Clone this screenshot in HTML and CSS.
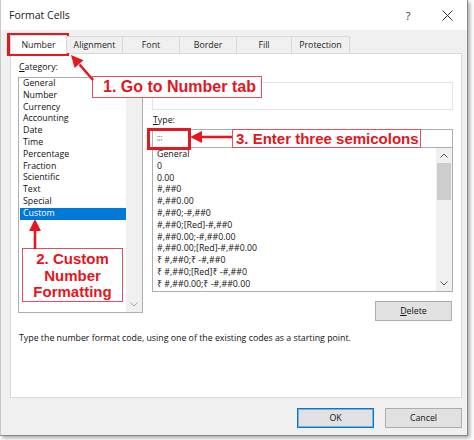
FILE: index.html
```html
<!DOCTYPE html>
<html lang="en">
<head>
<meta charset="utf-8">
<title>Format Cells</title>
<link rel="stylesheet" href="styles.css">
</head>
<body>
<div class="window">
  <div class="titlebar">
    <span class="title">Format Cells</span>
    <span class="help">?</span>
    <span class="close"><svg width="11" height="11" viewBox="0 0 11 11"><path d="M0.5 0.5 L10.5 10.5 M10.5 0.5 L0.5 10.5" stroke="#333" stroke-width="1" fill="none"/></svg></span>
  </div>
  <div class="tabs">
    <div class="tab active w57">Number</div>
    <div class="tab w57">Alignment</div>
    <div class="tab w58">Font</div>
    <div class="tab w58">Border</div>
    <div class="tab w56">Fill</div>
    <div class="tab w59">Protection</div>
  </div>
  <div class="panel">
    <div class="cols">
      <div class="left">
        <div class="label"><u>C</u>ategory:</div>
        <div class="listbox cat">
          <div class="items">
            <div class="item">General</div>
            <div class="item">Number</div>
            <div class="item">Currency</div>
            <div class="item">Accounting</div>
            <div class="item">Date</div>
            <div class="item">Time</div>
            <div class="item">Percentage</div>
            <div class="item">Fraction</div>
            <div class="item">Scientific</div>
            <div class="item">Text</div>
            <div class="item">Special</div>
            <div class="item selected">Custom</div>
          </div>
          <div class="vscroll disabled">
            <span class="sbtn"><svg width="8" height="5" viewBox="0 0 8 5"><path d="M0.5 0.5 L4 4 L7.5 0.5" stroke="#b0b0b0" fill="none"/></svg></span>
            <span class="track"></span>
            <span class="sbtn"><svg width="8" height="5" viewBox="0 0 8 5"><path d="M0.5 0.5 L4 4 L7.5 0.5" stroke="#a8a8a8" fill="none"/></svg></span>
          </div>
        </div>
      </div>
      <div class="right">
        <div class="sample"></div>
        <div class="label type-label"><u>T</u>ype:</div>
        <div class="input">;;;</div>
        <div class="listbox types">
          <div class="items">
            <div class="item">General</div>
            <div class="item">0</div>
            <div class="item">0.00</div>
            <div class="item">#,##0</div>
            <div class="item">#,##0.00</div>
            <div class="item">#,##0;-#,##0</div>
            <div class="item">#,##0;[Red]-#,##0</div>
            <div class="item">#,##0.00;-#,##0.00</div>
            <div class="item">#,##0.00;[Red]-#,##0.00</div>
            <div class="item">₹ #,##0;₹ -#,##0</div>
            <div class="item">₹ #,##0;[Red]₹ -#,##0</div>
            <div class="item">₹ #,##0.00;₹ -#,##0.00</div>
          </div>
          <div class="vscroll">
            <span class="sbtn"><svg width="8" height="5" viewBox="0 0 8 5"><path d="M0.5 4.5 L4 1 L7.5 4.5" stroke="#555" fill="none"/></svg></span>
            <span class="track"><span class="thumb"></span></span>
            <span class="sbtn"><svg width="8" height="5" viewBox="0 0 8 5"><path d="M0.5 0.5 L4 4 L7.5 0.5" stroke="#555" fill="none"/></svg></span>
          </div>
        </div>
        <div class="btnrow"><button class="btn"><u>D</u>elete</button></div>
      </div>
    </div>
    <p class="desc">Type the number format code, using one of the existing codes as a starting point.</p>
  </div>
  <div class="footer">
    <button class="btn ok">OK</button>
    <button class="btn">Cancel</button>
  </div>
</div>

<div class="hl hl-tab"></div>
<div class="hl hl-type"></div>
<div class="note note1">1. Go to Number tab</div>
<div class="note note2">2. Custom<br>Number<br>Formatting</div>
<div class="note note3">3. Enter three semicolons</div>
<svg class="arrows" width="474" height="440" viewBox="0 0 474 440">
  <g stroke="#e3191f" stroke-width="2.6" fill="none">
    <line x1="93" y1="80" x2="79.5" y2="64.5"/>
    <line x1="35" y1="249" x2="35" y2="230"/>
    <line x1="232" y1="137" x2="200" y2="137"/>
  </g>
  <g fill="#e3191f">
    <polygon points="71,55 83.5,60.2 74.6,68"/>
    <polygon points="35,219 41,231 29,231"/>
    <polygon points="190,137 202,131 202,143"/>
  </g>
</svg>
</body>
</html>
```

FILE: styles.css
```css
* { box-sizing: border-box; }
html, body { margin: 0; padding: 0; background: #fff; }
body {
  width: 474px;
  height: 440px;
  position: relative;
  overflow: hidden;
  font-family: "Open Sans", "Noto Sans", sans-serif;
  font-size: 8.8px;
  color: #111;
}
button { font-family: inherit; font-size: inherit; color: inherit; padding: 0; }

.window {
  width: 468px;
  height: 436px;
  background: #f0f0f0;
  border-left: 1px solid #c9c9c9;
  border-right: 1px solid #8a8a8a;
  border-bottom: 1px solid #8a8a8a;
  box-shadow: 2px 2px 4px rgba(0, 0, 0, 0.35);
  display: flex;
  flex-direction: column;
}

.titlebar {
  flex: none;
  height: 30px;
  background: #fff;
  display: flex;
  align-items: center;
  padding-left: 8px;
}
.title { flex: 1; font-size: 10.5px; color: #222; }
.help { width: 38px; text-align: center; font-size: 11px; color: #333; }
.close { width: 40px; display: flex; justify-content: center; align-items: center; }

.tabs {
  flex: none;
  display: flex;
  align-items: flex-end;
  height: 18px;
  margin-top: 5px;
  margin-left: 9px;
  position: relative;
  z-index: 1;
}
.tab {
  height: 17px;
  border: 1px solid #d9d9d9;
  border-bottom: none;
  margin-right: -1px;
  background: #f0f0f0;
  display: flex;
  align-items: center;
  justify-content: center;
  color: #222;
}
.tab.active { height: 19px; margin-bottom: -1px; background: #fff; padding-bottom: 1px; }
.w56 { width: 56px; }
.w57 { width: 57px; }
.w58 { width: 58px; }
.w59 { width: 59px; }

.panel {
  flex: none;
  margin-left: 9px;
  width: 452px;
  height: 345px;
  background: #fff;
  border: 1px solid #d9d9d9;
  padding: 7px 8px 0 7px;
}
.cols {
  display: grid;
  grid-template-columns: 125px 301px;
  column-gap: 9px;
}
.label { height: 12px; line-height: 12px; padding-left: 1px; }

.listbox {
  border: 1px solid #abadb3;
  background: #fff;
  display: flex;
}
.listbox .items { flex: 1; }
.item { height: 11.8px; line-height: 11.8px; white-space: nowrap; }
.cat { margin-top: 4px; height: 236px; }
.cat .item { padding-left: 3px; margin-left: 1px; }
.item.selected { background: #0078d7; color: #fff; }
.types { margin-top: -1px; height: 145px; }
.types .items { padding-top: 1px; }
.types .item { padding-left: 4px; }

.vscroll {
  width: 16px;
  flex: none;
  background: #f0f0f0;
  display: flex;
  flex-direction: column;
}
.sbtn { height: 15px; flex: none; display: flex; align-items: center; justify-content: center; }
.track { flex: 1; display: flex; flex-direction: column; padding: 0 1px; }
.thumb { height: 37px; background: #cdcdcd; }

.sample { margin-top: 21px; height: 28px; border: 1px solid #e3e3e3; }
.type-label { margin-top: 4px; }
.input {
  margin-top: 3px;
  height: 19px;
  border: 1px solid #abadb3;
  padding-left: 4px;
  line-height: 16px;
  font-size: 7px;
  color: #444;
}
.btnrow { display: flex; justify-content: flex-end; margin-top: 9px; padding-right: 1px; }
.btn {
  width: 77px;
  height: 20px;
  background: #e1e1e1;
  border: 1px solid #adadad;
  display: flex;
  align-items: center;
  justify-content: center;
}
.desc { margin: 11px 0 0 0; line-height: 12px; padding-left: 1px; }

.footer {
  flex: none;
  display: flex;
  justify-content: flex-end;
  gap: 11px;
  margin-top: 10px;
  padding-right: 5px;
}
.btn.ok { border: 1px solid #0078d7; box-shadow: inset 0 0 0 1px rgba(0, 120, 215, 0.45); }

/* annotations overlaid on the screenshot */
.hl { position: absolute; border: 3px solid #e3191f; }
.hl-tab { left: 7px; top: 33px; width: 62px; height: 23px; }
.hl-type { left: 147px; top: 128px; width: 44px; height: 22px; }

.note {
  position: absolute;
  background: #fff;
  border: 1px solid #e2505c;
  color: #e5141d;
  font-family: "Liberation Sans", Arial, sans-serif;
  font-weight: bold;
  white-space: nowrap;
}
.note1 { left: 92px; top: 76px; width: 170px; height: 22px; font-size: 16px; line-height: 20px; padding-left: 10px; }
.note2 { left: 22px; top: 248px; width: 101px; height: 54px; font-size: 15px; line-height: 16.5px; text-align: center; padding-top: 2px; }
.note3 { left: 232px; top: 129px; width: 189px; height: 19px; font-size: 15px; line-height: 17px; padding-left: 3px; }

.arrows { position: absolute; left: 0; top: 0; }
```
